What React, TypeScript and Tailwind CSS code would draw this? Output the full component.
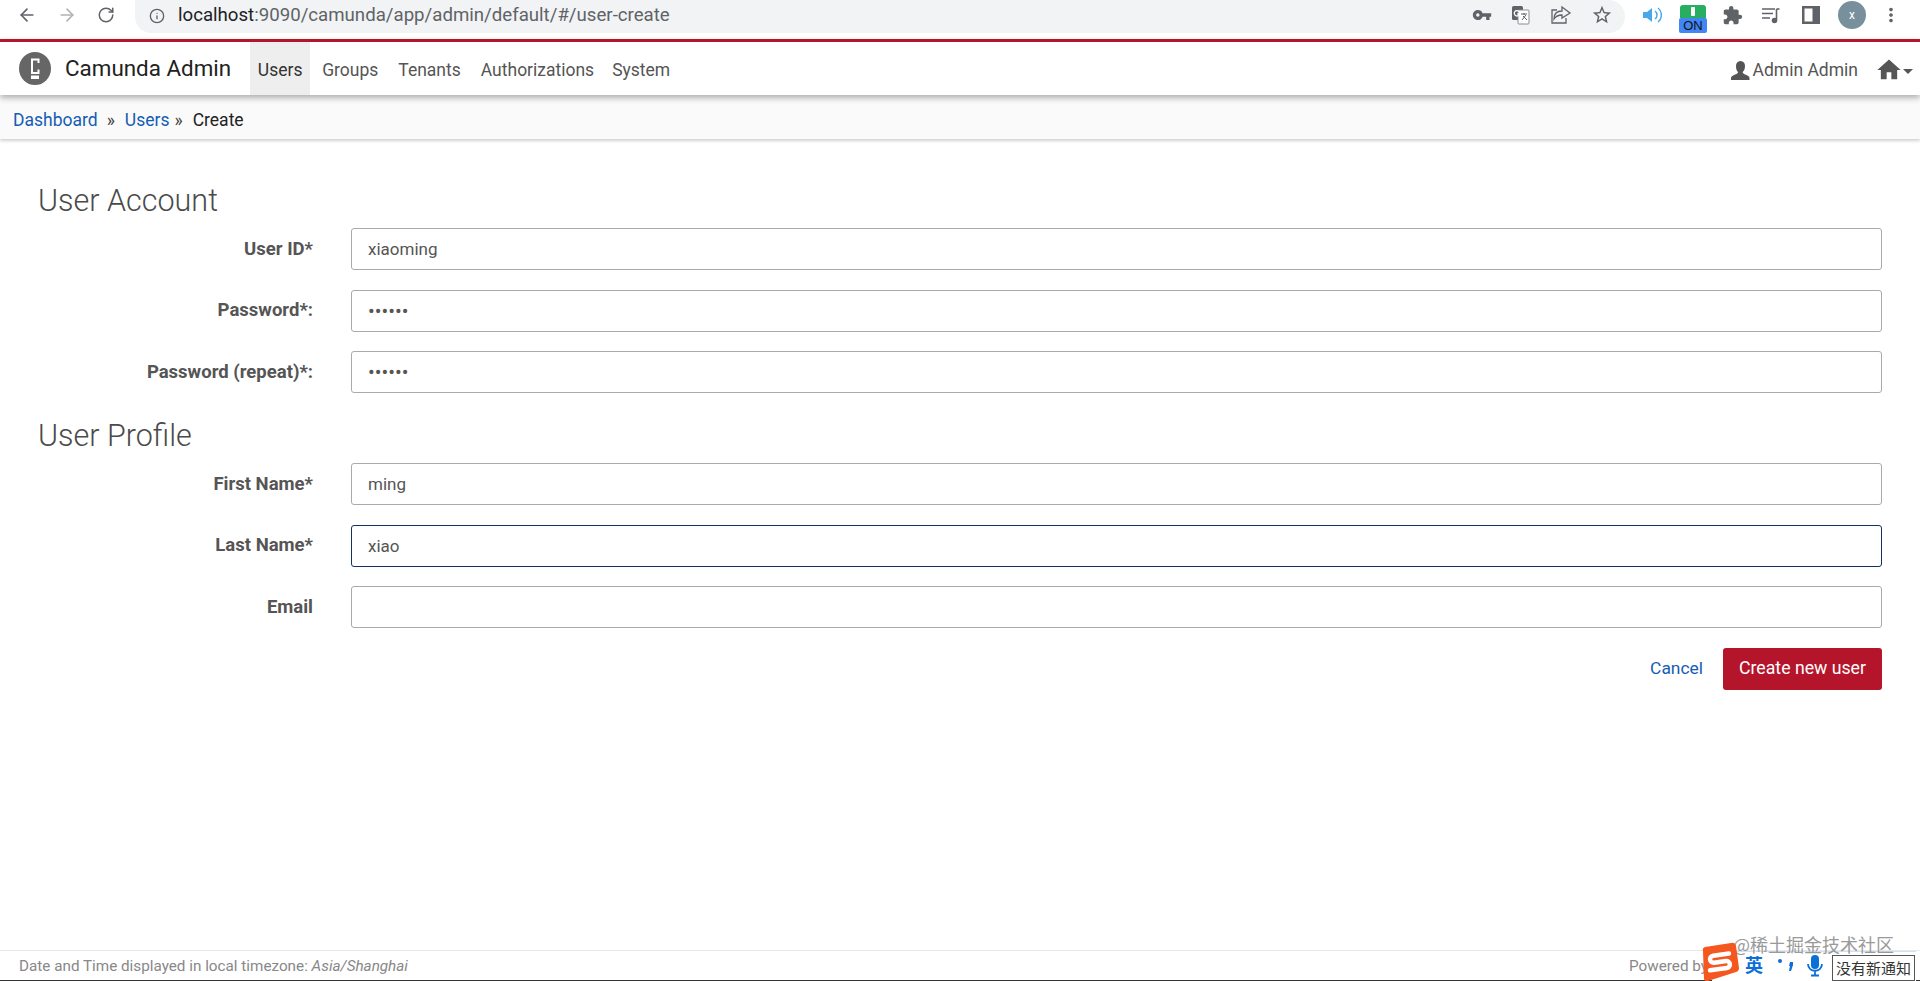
import { ArrowLeft, ArrowRight, RotateCw, Info } from 'lucide-react';
import { MdVpnKey, MdStarBorder, MdExtension, MdMoreVert, MdHome } from 'react-icons/md';

const font = 'font-["Roboto","Liberation_Sans",sans-serif]';

function FormRow({ label, value, type = 'text', focused = false }: { label: string; value: string; type?: string; focused?: boolean }) {
  return (
    <div className="flex items-center h-[42px] mb-[19.5px]">
      <label className="w-[275px] text-right font-bold text-[18.5px] text-[#555] pt-[1px]">{label}</label>
      <input
        readOnly
        type={type}
        value={value}
        className={`ml-[38px] flex-1 h-full px-[16px] rounded-[3px] border text-[#555] bg-white outline-none ${
          type === 'password' ? 'text-[20px]' : 'text-[17px]'
        } ${focused ? 'border-[#14305f]' : 'border-[#aaaaaa]'}`}
      />
    </div>
  );
}

function Toolbar() {
  return (
    <div className="h-[39px] flex items-start bg-white text-[#5f6368]">
      <div className="flex items-center h-[30px] w-[135px] pl-[17px] gap-[20px]">
        <ArrowLeft size={20} />
        <ArrowRight size={20} className="text-[#b0b3b7]" />
        <RotateCw size={18} />
      </div>
      <div className="w-[1490px] h-[33px] pb-[1px] bg-[#f1f3f4] rounded-r-[17px] rounded-bl-[17px] flex items-center pl-[14px]">
        <Info size={16} />
        <span className="ml-[13px] text-[18.65px] text-[#5f6368]">
          <span className="text-[#202124]">localhost</span>:9090/camunda/app/admin/default/#/user-create
        </span>
        <div className="ml-auto flex items-center -mt-[2px]">
          <MdVpnKey size={20} className="mr-[19px]" />
          <svg width="20" height="20" viewBox="0 0 20 20" className="mr-[19px]">
            <rect x="1" y="1" width="11" height="14" rx="1.500" fill="#5f6368" />
            <rect x="7" y="5" width="11" height="14" rx="1" fill="#fff" stroke="#8a8d91" />
            <path d="M10 9h6M13 8v2M11 15l4-5M12 11l4 4" stroke="#5f6368" strokeWidth="1" fill="none" />
            <path d="M8 6.500a2.700 2.700 0 1 0 .6 2.500H6.300" stroke="#fff" strokeWidth="1.300" fill="none" />
          </svg>
          <svg width="22" height="20" viewBox="0 0 22 20" className="mr-[19px]" fill="none" stroke="#5f6368" strokeWidth="1.300">
            <path d="M7 5H2v13h14v-5" />
            <path d="M12 2l8 6-8 5V10c-4 0-6 1-8 4 0-5 3-8 8-8z" />
          </svg>
          <MdStarBorder size={22} className="mr-[12px]" />
        </div>
      </div>
      <div className="flex-1 flex items-center h-[30px] pl-[17px]">
        <svg width="20" height="20" viewBox="0 0 20 20" fill="none">
          <path d="M1 7h4l5-4v14l-5-4H1z" fill="#4aa8e8" />
          <path d="M13 6a5 5 0 0 1 0 8M16 3a9 9 0 0 1 0 14" stroke="#4aa8e8" strokeWidth="1.500" />
        </svg>
        <div className="ml-[17px] w-[28px] h-[28px] mt-[8px] relative shrink-0">
          <div className="absolute top-0 left-[1px] right-[1px] h-[13px] rounded-t-[3px] bg-[#27ae60] flex justify-center">
            <span className="w-[4px] h-[9px] mt-[2px] bg-white rounded-[1px]" />
          </div>
          <div className="absolute bottom-0 left-0 right-0 h-[15px] rounded-[2px] bg-[#4285f4] text-[13px] leading-[15px] text-center text-[#111] font-['Liberation_Sans',sans-serif]">
            ON
          </div>
        </div>
        <MdExtension size={21} className="ml-[15px]" />
        <svg width="20" height="20" viewBox="0 0 20 20" className="ml-[18px]" fill="none" stroke="#5f6368" strokeWidth="1.600">
          <path d="M1 4h13M1 8.500h11M1 13h8" />
          <path d="M15.500 4v11" />
          <circle cx="13.500" cy="15.500" r="2" fill="#5f6368" />
          <path d="M15.500 4h3" />
        </svg>
        <svg width="18" height="18" viewBox="0 0 18 18" className="ml-[21px]">
          <path d="M0 0h18v18H0z" fill="#5f6368" />
          <path d="M2.500 2.500h8v13h-8z" fill="#fff" />
        </svg>
        <div className="ml-[18px] w-[28px] h-[28px] rounded-full bg-[#78909c] text-white text-[12px] flex items-center justify-center shrink-0">
          x
        </div>
        <MdMoreVert size={22} className="ml-[14px]" />
      </div>
    </div>
  );
}

function ImeBar() {
  return (
    <>
      <div className="absolute left-[1712px] right-[4px] bottom-0 h-[30px] bg-white border-t border-[#cfe2f3]" />
      <div className="absolute left-[1733px] top-[933px] text-[18px] leading-[22px] text-[#9a9a9a] font-['Noto_Sans_CJK_SC',sans-serif]">
        @稀土掘金技术社区
      </div>
      <svg width="42" height="40" viewBox="0 0 42 40" className="absolute left-[1699px] top-[942px]">
        <path d="M4 9q-1-3 2-4L32 1q4-1 5 3l3 22q0 3-3 4L9 39q-3 1-4-2z" fill="#f4581f" />
        <path d="M31 13H15a3.500 3.500 0 0 0 0 7h12a3.500 3.500 0 0 1 0 7H10" stroke="#fff" strokeWidth="4.500" fill="none" strokeLinecap="round" transform="rotate(-8 20 20)" />
      </svg>
      <span className="absolute left-[1745px] top-[953px] text-[18px] leading-[22px] font-bold text-[#0a6fd8] font-['Noto_Sans_CJK_SC',sans-serif]">英</span>
      <svg width="18" height="18" viewBox="0 0 18 18" className="absolute left-[1777px] top-[956px]">
        <circle cx="3" cy="5" r="2" fill="#0a6fd8" />
        <path d="M13 6h3v3l-2 6h-2l1-5h-1z" fill="#0a6fd8" />
      </svg>
      <svg width="18" height="24" viewBox="0 0 18 24" className="absolute left-[1806px] top-[954px]" fill="none">
        <rect x="5" y="1" width="8" height="14" rx="4" fill="#0a6fd8" />
        <path d="M2 10c0 9 14 9 14 0M9 17v4M5 21.500h8" stroke="#0a6fd8" strokeWidth="1.800" />
      </svg>
      <div className="absolute left-[1832px] top-[955px] w-[83px] h-[26px] bg-white border border-[#555] text-[15px] leading-[24px] text-center text-[#333] font-['Noto_Sans_CJK_SC',sans-serif]">
        没有新通知
      </div>
    </>
  );
}

export default function App() {
  return (
    <div className={`relative h-[981px] w-[1920px] overflow-hidden flex flex-col bg-white ${font}`}>
      <Toolbar />

      <header className="relative z-10 h-[56px] border-t-[3px] border-[#b5152b] bg-white flex items-center pl-[19px] pr-[7px] shadow-[0_3px_6px_rgba(0,0,0,0.3)] text-[#555]">
        <svg width="32" height="33" viewBox="0 0 32 33">
          <ellipse cx="16" cy="16.500" rx="16" ry="16.500" fill="#666" />
          <path d="M19.500 11V7.500h-6.500V21h6.500v-3.500" stroke="#fff" strokeWidth="2" fill="none" />
          <rect x="12" y="23.500" width="8" height="3.500" fill="#fff" />
        </svg>
        <span className="ml-[14px] text-[22.4px] text-[#222]">Camunda Admin</span>
        <nav className="ml-[19px] flex items-stretch h-full text-[17.5px]">
          <a className="bg-[#eeeeee] w-[60px] flex items-center justify-center text-[#333] pt-[3px]">Users</a>
          <a className="ml-[12px] flex items-center pt-[3px]">Groups</a>
          <a className="ml-[20px] flex items-center pt-[3px]">Tenants</a>
          <a className="ml-[20px] flex items-center pt-[3px]">Authorizations</a>
          <a className="ml-[18px] flex items-center pt-[3px]">System</a>
        </nav>
        <div className="ml-auto flex items-center text-[17.5px] pt-[3px]">
          <svg width="19" height="19" viewBox="0 0 19 19" fill="#555">
            <path d="M9.500 0c3 0 4.500 2.200 4.500 5s-1 5-2.300 6c0 1.500 1 1.800 3.300 2.800 2 .9 3.500 1.700 3.500 3.200v2H0v-2c0-1.500 1.500-2.300 3.500-3.200C5.800 12.800 7 12.500 7 11 5.700 10 5 7.800 5 5s1.500-5 4.500-5z" />
          </svg>
          <span className="ml-[3px]">Admin Admin</span>
          <MdHome size={28} className="ml-[17px] -mr-[2px]" />
          <span className="ml-[2px] mt-[2px] w-0 h-0 border-x-[5px] border-x-transparent border-t-[5px] border-t-[#555]" />
        </div>
      </header>

      <div className="h-[44px] bg-[#fafafa] flex items-center pl-[13px] pt-[7px] text-[17.5px] shadow-[0_2px_3px_rgba(0,0,0,0.18)]">
        <a className="text-[#155cb5]">Dashboard</a>
        <span className="ml-[9px] text-[#444]">»</span>
        <a className="ml-[10px] text-[#155cb5]">Users</a>
        <span className="ml-[5px] text-[#444]">»</span>
        <span className="ml-[10px] text-[#222]">Create</span>
      </div>

      <main className="flex-1 px-[38px] pt-[41px]">
        <h2 className="text-[30.5px] font-light text-[#4a4a4a] leading-[42px] mb-[6px]">User Account</h2>
        <FormRow label="User ID*" value="xiaoming" />
        <FormRow label="Password*:" value="xiaomi" type="password" />
        <FormRow label="Password (repeat)*:" value="xiaomi" type="password" />
        <h2 className="text-[30.5px] font-light text-[#4a4a4a] leading-[42px] mt-[22px] mb-[6px]">User Profile</h2>
        <FormRow label="First Name*" value="ming" />
        <FormRow label="Last Name*" value="xiao" focused />
        <FormRow label="Email" value="" />
        <div className="flex justify-end items-center">
          <a className="text-[17.4px] text-[#155cb5] mr-[20px]">Cancel</a>
          <button type="button" className="w-[159px] h-[42px] bg-[#b5152b] rounded-[3px] text-white text-[17.7px]">
            Create new user
          </button>
        </div>
      </main>

      <footer className="h-[31px] border-t border-[#e8e8e8] flex items-center pl-[19px] text-[15.25px] text-[#888]">
        <span>
          Date and Time displayed in local timezone: <em>Asia/Shanghai</em>
        </span>
        <span className="absolute left-[1629px]">Powered by</span>
      </footer>
      <div className="absolute bottom-0 left-0 right-0 h-px bg-[#333]" />
      <ImeBar />
    </div>
  );
}
